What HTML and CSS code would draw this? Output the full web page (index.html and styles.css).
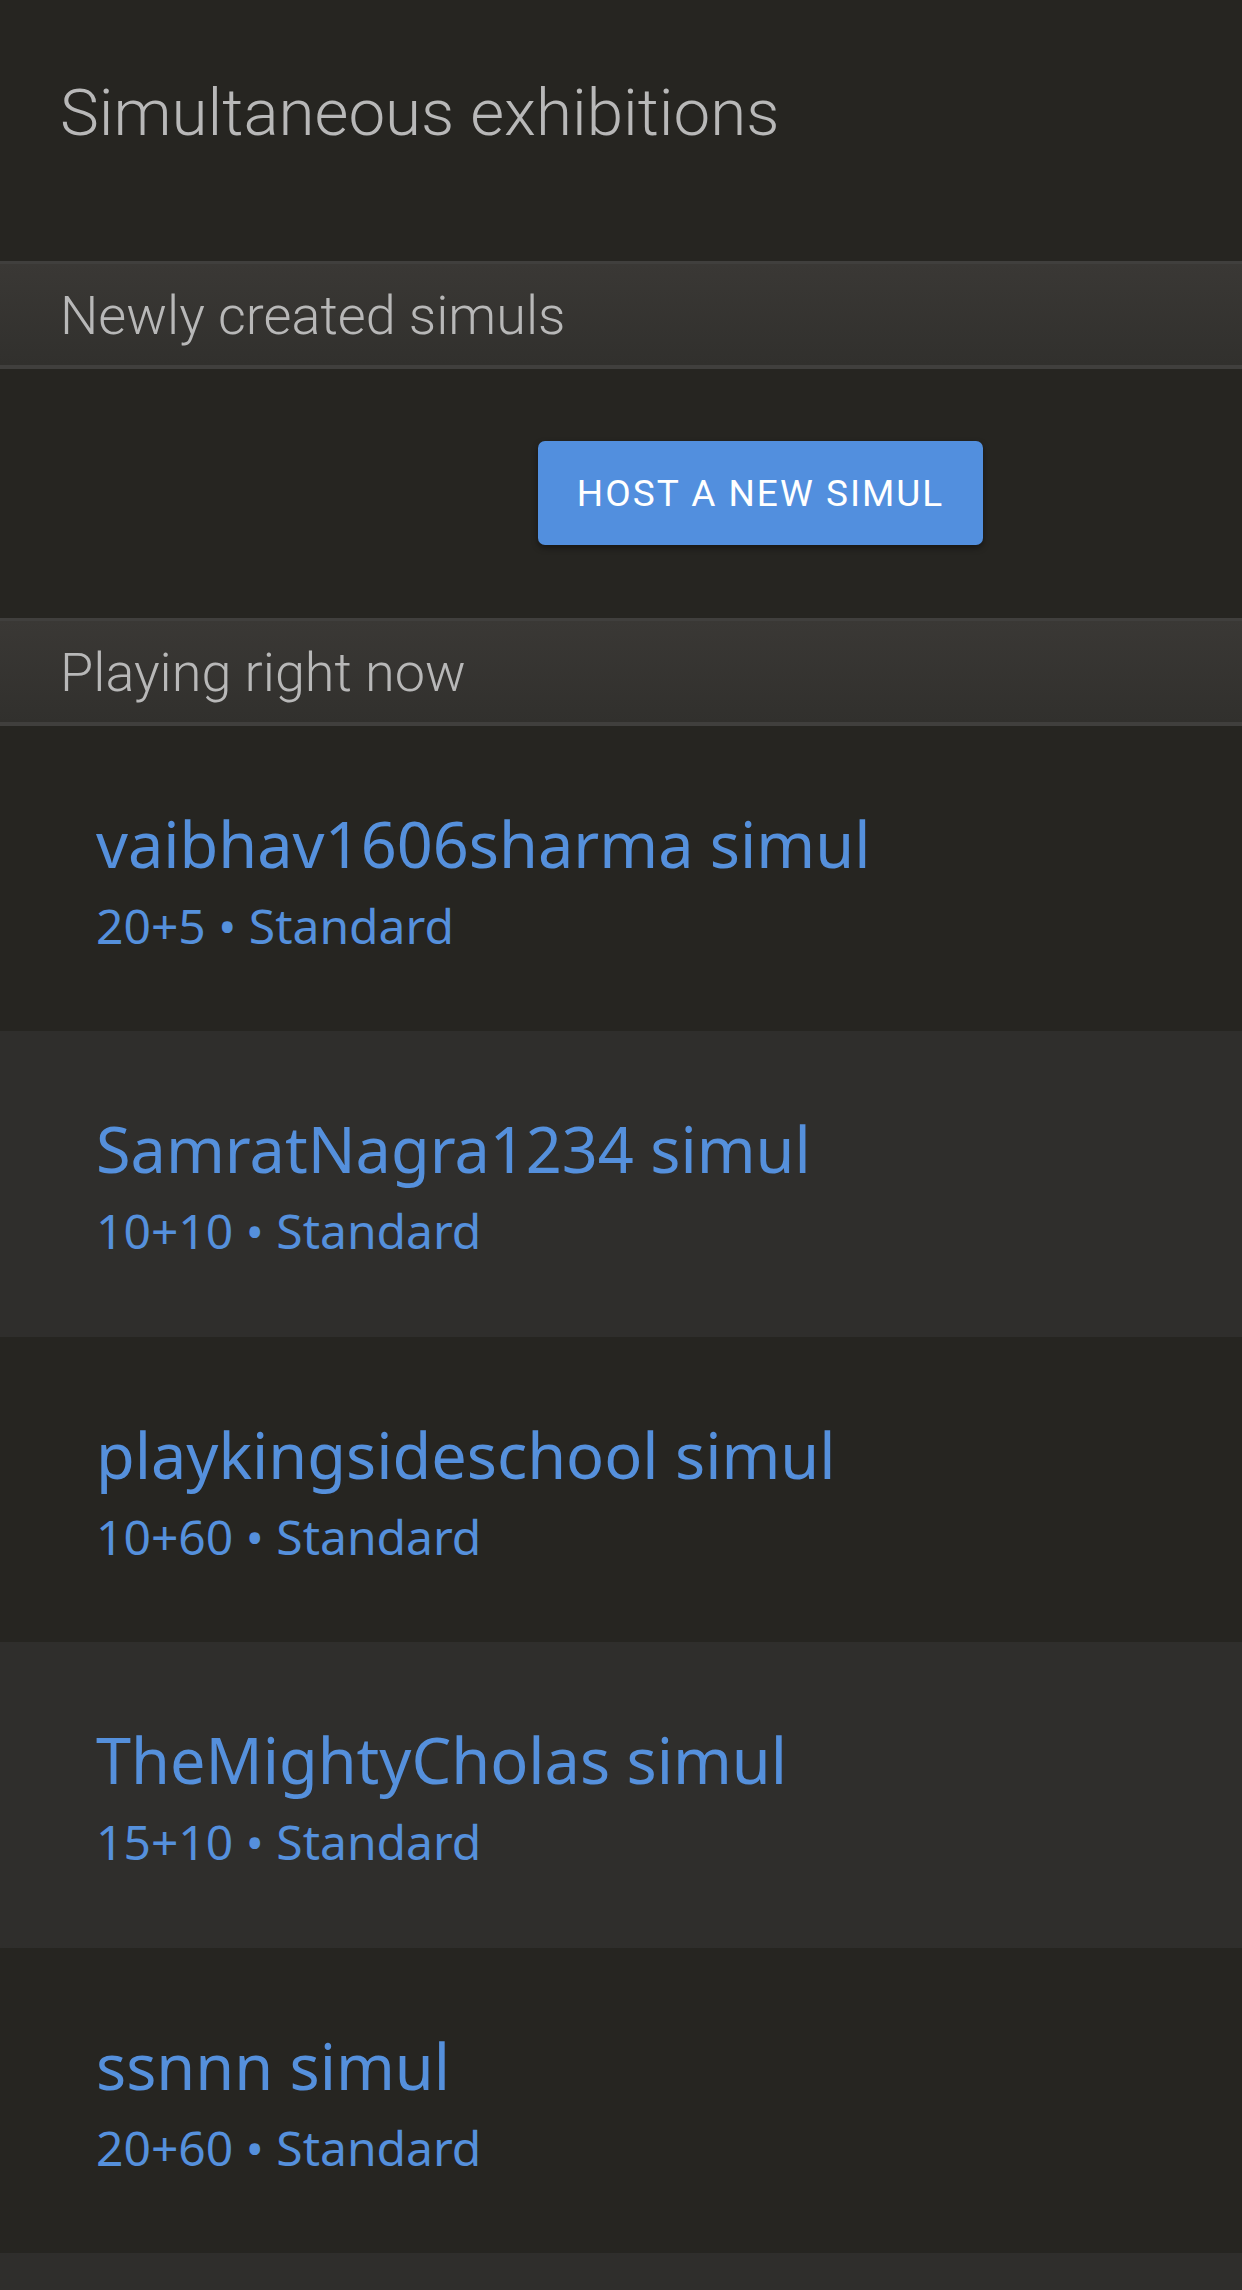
FILE: index.html
```html
<html lang="en">

<head>
    <meta charset="UTF-8">
    <meta name="viewport" content="width=device-width, initial-scale=1.0">
    <title>Simultaneous exhibitions</title>
    <link rel="stylesheet" href="styles.css">
</head>

<body>
    <header class="page-header">
        <h1>Simultaneous exhibitions</h1>
    </header>

    <div class="section-title">Newly created simuls</div>

    <div class="create-box">
        <button class="create-btn">Host a new simul</button>
    </div>

    <div class="section-title">Playing right now</div>

    <ul class="simul-list">
        <li class="simul">
            <div class="simul-name">vaibhav1606sharma simul</div>
            <div class="simul-info">20+5 • Standard</div>
        </li>
        <li class="simul">
            <div class="simul-name">SamratNagra1234 simul</div>
            <div class="simul-info">10+10 • Standard</div>
        </li>
        <li class="simul">
            <div class="simul-name">playkingsideschool simul</div>
            <div class="simul-info">10+60 • Standard</div>
        </li>
        <li class="simul">
            <div class="simul-name">TheMightyCholas simul</div>
            <div class="simul-info">15+10 • Standard</div>
        </li>
        <li class="simul">
            <div class="simul-name">ssnnn simul</div>
            <div class="simul-info">20+60 • Standard</div>
        </li>
        <li class="simul"></li>
    </ul>
</body>

</html>
```

FILE: styles.css
```css
body {
    margin: 0;
    padding: 0;
    background-color: #262521;
    font-family: Roboto, "Noto Sans", sans-serif;
    color: #b8b8b8;
    overflow: hidden;
}

.page-header {
    box-sizing: border-box;
    height: 261px;
    padding: 80px 60px 0;
}

.page-header h1 {
    margin: 0;
    font-size: 65.5px;
    font-weight: 300;
    line-height: 66px;
}

.section-title {
    box-sizing: border-box;
    height: 108px;
    padding: 19px 60px 0;
    border-top: 3px solid #403f3d;
    border-bottom: 4px solid #403f3d;
    background: linear-gradient(to bottom, #3a3835, #31302d);
    font-size: 54px;
    font-weight: 300;
    line-height: 66px;
}

.create-box {
    box-sizing: border-box;
    height: 249px;
    padding: 72px 0 0 538px;
}

.create-btn {
    width: 445px;
    height: 104px;
    background-color: #528fde;
    color: white;
    border: none;
    border-radius: 7px;
    box-shadow: 0 3px 6px rgba(0, 0, 0, 0.4);
    font-family: Roboto, sans-serif;
    font-size: 37px;
    letter-spacing: 2px;
    text-transform: uppercase;
    cursor: pointer;
}

.simul-list {
    list-style: none;
    margin: 0;
    padding: 0;
}

.simul {
    box-sizing: border-box;
    height: 305.4px;
    padding: 78px 96px 0;
    font-family: "Noto Sans", sans-serif;
    color: #5590dc;
}

.simul:nth-child(even) {
    background-color: #2f2e2c;
}

.simul-name {
    font-size: 63px;
    line-height: 80px;
}

.simul-info {
    font-size: 48px;
    line-height: 64px;
    margin-top: 10px;
}
```
